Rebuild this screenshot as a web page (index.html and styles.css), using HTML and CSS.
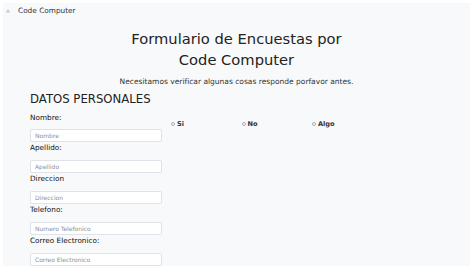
FILE: index.html
```html
<!DOCTYPE html>
<html lang="es">
<head>
    <meta charset="UTF-8">
    <title>Formulario de Encuestas</title>
    <link rel="stylesheet" href="styles.css">
</head>
<body>
<div class="page">
    <div class="brand">
        <svg class="brand-icon" width="6" height="5" viewBox="0 0 6 5"><path d="M0.5 4.5 L3 1 L5.5 4.5 Z" fill="#c9cdd1"/></svg>
        <span>Code Computer</span>
    </div>
    <h1 class="title">Formulario de Encuestas por<br>Code Computer</h1>
    <p class="lead">Necesitamos verificar algunas cosas responde porfavor antes.</p>
    <div class="form">
        <h2 class="section">DATOS PERSONALES</h2>
        <div class="row">
            <div class="col-fields">
                <label class="field-label">Nombre:</label>
                <input class="field" type="text" placeholder="Nombre">
                <label class="field-label">Apellido:</label>
                <input class="field" type="text" placeholder="Apellido">
                <label class="field-label">Direccion</label>
                <input class="field" type="text" placeholder="Direccion">
                <label class="field-label">Telefono:</label>
                <input class="field" type="text" placeholder="Numero Telefonico">
                <label class="field-label">Correo Electronico:</label>
                <input class="field" type="text" placeholder="Correo Electronico">
            </div>
            <div class="col-radio"><label class="opt"><span class="dot"></span>Si</label></div>
            <div class="col-radio"><label class="opt"><span class="dot"></span>No</label></div>
            <div class="col-radio"><label class="opt"><span class="dot"></span>Algo</label></div>
        </div>
    </div>
</div>
</body>
</html>
```

FILE: styles.css
```css
*{margin: 0px;padding: 0px;box-sizing: border-box;}
body{
    background: #fff;
    font-family: "DejaVu Sans", sans-serif;
    color: #212529;
}
.page{
    margin: 3px 4px 0 3px;
    height: 263px;
    background: #f8f9fa;
    overflow: hidden;
}
.brand{
    height: 14px;
    display: flex;
    align-items: center;
    font-size: 7.35px;
    color: #333;
    padding-left: 2px;
}
.brand-icon{
    margin-right: 7px;
}
.title{
    margin-top: 11px;
    font-weight: normal;
    font-size: 14.7px;
    line-height: 21px;
    text-align: center;
    color: #222;
}
.lead{
    margin-top: 7px;
    font-size: 7.5px;
    line-height: 10px;
    text-align: center;
    color: #333;
}
.form{
    padding-left: 27px;
}
.section{
    margin-top: 4px;
    font-weight: normal;
    font-size: 11.7px;
    line-height: 16px;
    color: #222;
}
.row{
    display: flex;
}
.col-fields{
    width: 132px;
    display: flex;
    flex-direction: column;
}
.field-label{
    font-size: 7.3px;
    line-height: 11px;
    color: #111;
    margin-bottom: 7px;
}
.col-fields .field-label:first-child{
    margin-top: 5px;
    margin-bottom: 6px;
}
.field{
    height: 13px;
    border: 1px solid #dfe3e7;
    border-radius: 2px;
    background: #fff;
    padding: 0 4px;
    font-family: "DejaVu Sans", sans-serif;
    font-size: 6px;
    color: #333;
    outline: none;
}
.field::placeholder{
    color: #8a9096;
}
.col-radio{
    width: 70.5px;
    padding-top: 13px;
}
.col-radio:nth-child(2){
    margin-left: 9px;
}
.opt{
    display: flex;
    align-items: center;
    font-size: 6.6px;
    font-weight: bold;
    color: #333;
}
.dot{
    width: 4px;
    height: 4px;
    border: 1px solid #a7adb3;
    border-radius: 50%;
    background: #fff;
    margin-right: 2px;
}
```
